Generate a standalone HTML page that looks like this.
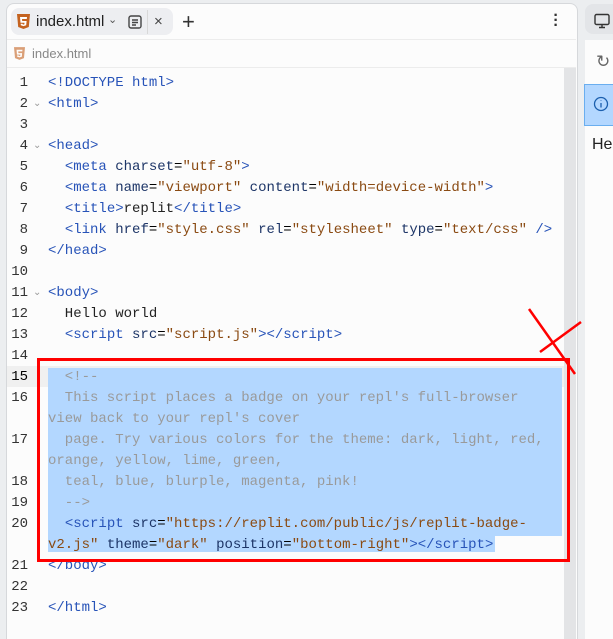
<!DOCTYPE html>
<html style="overflow:hidden;height:639px"><head><style>
body{margin:0;width:613px;height:639px;background:#eceef0;position:relative;overflow:hidden;font-family:"Liberation Sans",sans-serif}
.ed{position:absolute;left:6px;top:3px;width:570px;height:640px;background:#fcfcfc;border:1px solid #d6d8db;border-bottom:none;border-radius:8px 8px 0 0;}
.tab{position:absolute;left:11px;top:8px;width:162px;height:27px;background:#edeef1;border-radius:8px}
.code{position:absolute;left:0;top:73px;font-family:"Liberation Mono",monospace;font-size:14px;}
.l{position:absolute;height:21px;line-height:21px;white-space:pre}
.n{position:absolute;width:28px;text-align:right;left:0;color:#333;font-family:"Liberation Mono",monospace;font-size:14px;line-height:21px}
.t{color:#2753b8}.a{color:#1d3567}.s{color:#8a4a12}.c{color:#9a9a9a}.x{color:#222}
.sel{position:absolute;background:#b3d7ff}
</style></head><body>
<div class="ed"></div>
<div class="tab"></div>
<svg style="position:absolute;left:17px;top:14px" width="13" height="15" viewBox="0 0 13 15"><path d="M0 0h13l-1.2 13L6.5 15 1.2 13z" fill="#c4621f"/><path d="M3 3h7l-.2 2H5l.2 2h4.4l-.4 4.3-2.7.8-2.7-.8-.1-1.6h1.8l.1.6 .9.3.9-.3.1-1.5H3.5z" fill="#fff"/></svg>
<div style="position:absolute;left:36px;top:13px;font-size:15px;color:#222">index.html</div>
<div style="position:absolute;left:108px;top:13px;font-size:11px;color:#555">&#8964;</div>
<svg style="position:absolute;left:128px;top:15px" width="14" height="14" viewBox="0 0 14 14" fill="none" stroke="#444" stroke-width="1.4"><rect x="1" y="1" width="12" height="12" rx="2"/><path d="M4 5h6M4 7.5h6M4 10h4"/></svg>
<div style="position:absolute;left:147px;top:10px;width:1px;height:24px;background:#d8d8d8"></div>
<div style="position:absolute;left:154px;top:13px;font-size:15px;color:#444">×</div>
<div style="position:absolute;left:182px;top:9px;font-size:22px;color:#333;font-weight:300">+</div>
<div style="position:absolute;left:553px;top:13px;font-size:16px;color:#333;font-weight:bold;line-height:5px;width:6px;text-align:center">·<br>·<br>·</div>
<div style="position:absolute;left:7px;top:39px;width:569px;height:1px;background:#ececec"></div>
<svg style="position:absolute;left:14px;top:47px;opacity:.6" width="11" height="13" viewBox="0 0 13 15"><path d="M0 0h13l-1.2 13L6.5 15 1.2 13z" fill="#c4621f"/><path d="M3 3h7l-.2 2H5l.2 2h4.4l-.4 4.3-2.7.8-2.7-.8-.1-1.6h1.8l.1.6 .9.3.9-.3.1-1.5H3.5z" fill="#fff"/></svg>
<div style="position:absolute;left:32px;top:46px;font-size:13px;color:#888">index.html</div>
<div style="position:absolute;left:7px;top:67px;width:569px;height:1px;background:#ececec"></div>
<div style="position:absolute;left:564px;top:68px;width:12px;height:571px;background:#e3e4e6"></div>
<div style="position:absolute;left:7px;top:366px;width:557px;height:21px;background:#f0f0f0"></div>
<div class="sel" style="left:48px;top:368px;width:514px;height:168px"></div>
<div class="sel" style="left:48px;top:532px;width:447px;height:20px"></div>
<div class="code">
<div class="n" style="top:0">1</div><div class="l" style="left:48px;top:0"><span class="t">&lt;!DOCTYPE html&gt;</span></div>
<div class="n" style="top:21px">2</div><div class="l c" style="left:33px;top:21px;font-size:10px">⌄</div><div class="l" style="left:48px;top:21px"><span class="t">&lt;html&gt;</span></div>
<div class="n" style="top:42px">3</div>
<div class="n" style="top:63px">4</div><div class="l c" style="left:33px;top:63px;font-size:10px">⌄</div><div class="l" style="left:48px;top:63px"><span class="t">&lt;head&gt;</span></div>
<div class="n" style="top:84px">5</div><div class="l" style="left:48px;top:84px">  <span class="t">&lt;meta</span> <span class="a">charset</span>=<span class="s">"utf-8"</span><span class="t">&gt;</span></div>
<div class="n" style="top:105px">6</div><div class="l" style="left:48px;top:105px">  <span class="t">&lt;meta</span> <span class="a">name</span>=<span class="s">"viewport"</span> <span class="a">content</span>=<span class="s">"width=device-width"</span><span class="t">&gt;</span></div>
<div class="n" style="top:126px">7</div><div class="l" style="left:48px;top:126px">  <span class="t">&lt;title&gt;</span><span class="x">replit</span><span class="t">&lt;/title&gt;</span></div>
<div class="n" style="top:147px">8</div><div class="l" style="left:48px;top:147px">  <span class="t">&lt;link</span> <span class="a">href</span>=<span class="s">"style.css"</span> <span class="a">rel</span>=<span class="s">"stylesheet"</span> <span class="a">type</span>=<span class="s">"text/css"</span> <span class="t">/&gt;</span></div>
<div class="n" style="top:168px">9</div><div class="l" style="left:48px;top:168px"><span class="t">&lt;/head&gt;</span></div>
<div class="n" style="top:189px">10</div>
<div class="n" style="top:210px">11</div><div class="l c" style="left:33px;top:210px;font-size:10px">⌄</div><div class="l" style="left:48px;top:210px"><span class="t">&lt;body&gt;</span></div>
<div class="n" style="top:231px">12</div><div class="l x" style="left:48px;top:231px">  Hello world</div>
<div class="n" style="top:252px">13</div><div class="l" style="left:48px;top:252px">  <span class="t">&lt;script</span> <span class="a">src</span>=<span class="s">"script.js"</span><span class="t">&gt;&lt;/script&gt;</span></div>
<div class="n" style="top:273px">14</div>
<div class="n" style="top:294px;color:#000">15</div><div class="l c" style="left:48px;top:294px">  &lt;!--</div>
<div class="n" style="top:315px">16</div><div class="l c" style="left:48px;top:315px">  This script places a badge on your repl's full-browser</div><div class="l c" style="left:48px;top:336px">view back to your repl's cover</div>
<div class="n" style="top:357px">17</div><div class="l c" style="left:48px;top:357px">  page. Try various colors for the theme: dark, light, red,</div><div class="l c" style="left:48px;top:378px">orange, yellow, lime, green,</div>
<div class="n" style="top:399px">18</div><div class="l c" style="left:48px;top:399px">  teal, blue, blurple, magenta, pink!</div>
<div class="n" style="top:420px">19</div><div class="l c" style="left:48px;top:420px">  --&gt;</div>
<div class="n" style="top:441px">20</div><div class="l" style="left:48px;top:441px">  <span class="t">&lt;script</span> <span class="a">src</span>=<span class="s">"https://replit.com/public/js/replit-badge-</span></div><div class="l" style="left:48px;top:462px"><span class="s">v2.js"</span> <span class="a">theme</span>=<span class="s">"dark"</span> <span class="a">position</span>=<span class="s">"bottom-right"</span><span class="t">&gt;&lt;/script&gt;</span></div>
<div class="n" style="top:483px">21</div><div class="l" style="left:48px;top:483px"><span class="t">&lt;/body&gt;</span></div>
<div class="n" style="top:504px">22</div>
<div class="n" style="top:525px">23</div><div class="l" style="left:48px;top:525px"><span class="t">&lt;/html&gt;</span></div>
</div>
<div style="position:absolute;left:37px;top:358px;width:527px;height:198px;border:3px solid #f00"></div>
<svg style="position:absolute;left:0;top:0" width="613" height="639"><path d="M529 309 L575 374" stroke="#f00" stroke-width="2.5" fill="none"/><path d="M540 352 L581 322" stroke="#f00" stroke-width="2.5" fill="none"/></svg>
<div style="position:absolute;left:585px;top:4px;width:40px;height:30px;background:#e3e5e8;border-radius:8px"></div>
<svg style="position:absolute;left:594px;top:13px" width="16" height="16" viewBox="0 0 16 16" fill="none" stroke="#333" stroke-width="1.4"><rect x="1" y="1.5" width="14" height="10" rx="1.5"/><path d="M8 11.5v3M5 14.5h6"/></svg>
<div style="position:absolute;left:585px;top:40px;width:40px;height:599px;background:#fcfcfc"></div>
<div style="position:absolute;left:596px;top:52px;font-size:17px;color:#666">↻</div>
<div style="position:absolute;left:584px;top:84px;width:40px;height:40px;background:#b3d7ff;border:1px solid #6aaeef"></div>
<svg style="position:absolute;left:593px;top:96px" width="16" height="16" viewBox="0 0 16 16" fill="none" stroke="#1b5fae" stroke-width="1.3"><circle cx="8" cy="8" r="6.5"/><path d="M8 7v4.5M8 4.5v.5"/></svg>
<div style="position:absolute;left:592px;top:136px;font-size:16px;color:#222">Hello</div>
</body></html>
